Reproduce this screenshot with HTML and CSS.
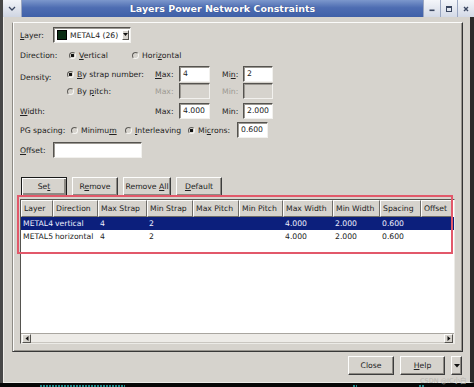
FILE: index.html
```html
<!DOCTYPE html>
<html>
<head>
<meta charset="utf-8">
<link rel="stylesheet" href="styles.css">
</head>
<body>
<div class="screen">
  <div class="window">
    <div class="titlebar">
      <div class="sysbtn"><svg width="8" height="5" viewBox="0 0 8 5"><path d="M1 1 L4 4 L7 1" fill="none" stroke="#3a4660" stroke-width="1.3"/></svg></div>
      <div class="title">Layers Power Network Constraints</div>
      <div class="wbtn"><svg width="8" height="8" viewBox="0 0 8 8"><rect x="1.5" y="4.5" width="5" height="1.6" fill="#3a4660"/></svg></div>
      <div class="wbtn"><svg width="8" height="8" viewBox="0 0 8 8"><rect x="1.5" y="1.5" width="5" height="5" fill="none" stroke="#3a4660" stroke-width="1"/><rect x="1.5" y="1.5" width="5" height="1.5" fill="#3a4660"/></svg></div>
      <div class="wbtn"><svg width="8" height="8" viewBox="0 0 8 8"><path d="M2 2 L6 6 M6 2 L2 6" stroke="#3a4660" stroke-width="1.4"/></svg></div>
    </div>
    <div class="body">
      <div class="panel">
        <div class="row r-layer">
          <span class="lbl w-layer"><u>L</u>ayer:</span>
          <div class="combo">
            <span class="swatch"></span>
            <span class="combo-text">METAL4 (26)</span>
            <span class="combo-arrow"><svg width="5" height="4" viewBox="0 0 5 4"><path d="M0 0 H5 L2.5 3 Z" fill="#111"/></svg></span>
          </div>
        </div>

        <div class="row r-dir">
          <span class="lbl w-dir">Direction:</span>
          <span class="opt w-vert"><span class="radio on"></span><span><u>V</u>ertical</span></span>
          <span class="opt"><span class="radio"></span><span>Hori<u>z</u>ontal</span></span>
        </div>

        <div class="row r-dens1">
          <span class="lbl w-dens dens-lbl">Density:</span>
          <span class="opt w-dopt"><span class="radio on"></span><span><u>B</u>y strap number:</span></span>
          <span class="lbl w-max"><u>M</u>ax:</span>
          <span class="field w-in1">4</span>
          <span class="spacer"></span>
          <span class="lbl w-min">Mi<u>n</u>:</span>
          <span class="field w-in2">2</span>
        </div>

        <div class="row r-dens2">
          <span class="lbl w-dens"></span>
          <span class="opt w-dopt"><span class="radio"></span><span>By <u>p</u>itch:</span></span>
          <span class="lbl w-max dis">Max:</span>
          <span class="field w-in1 off"></span>
          <span class="spacer"></span>
          <span class="lbl w-min dis">Min:</span>
          <span class="field w-in2 off"></span>
        </div>

        <div class="row r-width">
          <span class="lbl w-dens"><u>W</u>idth:</span>
          <span class="w-dopt"></span>
          <span class="lbl w-max">Max:</span>
          <span class="field w-in1">4.000</span>
          <span class="spacer"></span>
          <span class="lbl w-min">Min:</span>
          <span class="field w-in2">2.000</span>
        </div>

        <div class="row r-pg">
          <span class="lbl w-pg">PG spacing:</span>
          <span class="opt w-minimum"><span class="radio"></span><span>Minimu<u>m</u></span></span>
          <span class="opt w-inter"><span class="radio"></span><span><u>I</u>nterleaving</span></span>
          <span class="opt w-microns"><span class="radio on"></span><span>Mi<u>c</u>rons:</span></span>
          <span class="field w-in1">0.600</span>
        </div>

        <div class="row r-offset">
          <span class="lbl w-layer"><u>O</u>ffset:</span>
          <span class="field w-offset"></span>
        </div>

        <div class="btnrow">
          <button class="btn default"><span>Se<u>t</u></span></button>
          <button class="btn"><span>R<u>e</u>move</span></button>
          <button class="btn wide"><span>Remove <u>A</u>ll</span></button>
          <button class="btn"><span><u>D</u>efault</span></button>
        </div>

        <div class="list">
          <div class="grid">
            <div class="thead">
              <span class="th c1">Layer</span>
              <span class="th c2">Direction</span>
              <span class="th c3">Max Strap</span>
              <span class="th c4">Min Strap</span>
              <span class="th c5">Max Pitch</span>
              <span class="th c6">Min Pitch</span>
              <span class="th c7">Max Width</span>
              <span class="th c8">Min Width</span>
              <span class="th c9">Spacing</span>
              <span class="th c10">Offset</span>
            </div>
            <div class="tr sel">
              <span class="td c1">METAL4</span>
              <span class="td c2">vertical</span>
              <span class="td c3">4</span>
              <span class="td c4">2</span>
              <span class="td c5"></span>
              <span class="td c6"></span>
              <span class="td c7">4.000</span>
              <span class="td c8">2.000</span>
              <span class="td c9">0.600</span>
              <span class="td c10"></span>
            </div>
            <div class="tr">
              <span class="td c1">METAL5</span>
              <span class="td c2">horizontal</span>
              <span class="td c3">4</span>
              <span class="td c4">2</span>
              <span class="td c5"></span>
              <span class="td c6"></span>
              <span class="td c7">4.000</span>
              <span class="td c8">2.000</span>
              <span class="td c9">0.600</span>
              <span class="td c10"></span>
            </div>
          </div>
          <div class="hscroll">
            <span class="sarrow"><svg width="4" height="5" viewBox="0 0 4 5"><path d="M3.5 0 V5 L0.5 2.5 Z" fill="#111"/></svg></span>
            <span class="track"></span>
            <span class="sarrow"><svg width="4" height="5" viewBox="0 0 4 5"><path d="M0.5 0 V5 L3.5 2.5 Z" fill="#111"/></svg></span>
          </div>
        </div>
      </div>

      <div class="footer">
        <button class="btn"><span>Close</span></button>
        <button class="btn help"><span><u>H</u>elp</span></button>
        <button class="btn arrowbtn"><svg width="6" height="4" viewBox="0 0 6 4"><path d="M0 0 H6 L3 3.5 Z" fill="#111"/></svg></button>
      </div>
    </div>
  </div>
  <div class="desktop"><span class="teal t1"></span><span class="teal t2"></span><span class="teal t3"></span></div>
  <div class="annot"></div>
  <div class="watermark">CSDN @IC小白</div>
</div>
</body>
</html>
```

FILE: styles.css
```css
* { box-sizing: border-box; margin: 0; padding: 0; }
html, body { width: 474px; height: 387px; overflow: hidden; }
body {
  background: #444;
  font-family: "DejaVu Sans", "Noto Sans CJK SC", sans-serif;
  font-size: 7.7px;
  color: #222;
}
u { text-decoration: underline; text-underline-offset: 1px; }

.screen { position: relative; width: 474px; height: 387px; background: #474747; }

.window {
  margin-left: 3px;
  width: 471px;
  height: 383px;
  display: flex;
  flex-direction: column;
}

/* title bar */
.titlebar {
  height: 17px;
  display: flex;
  gap: 1px;
  background: #9aa6c0;
}
.sysbtn {
  width: 18px;
  background: linear-gradient(#f2f4f8, #cfd5e2);
  display: flex;
  align-items: center;
  justify-content: center;
}
.title {
  flex: 1;
  background: linear-gradient(#7c97cc, #4e6db2 45%, #3f60a8);
  color: #fff;
  font-weight: bold;
  font-size: 9.5px;
  display: flex;
  align-items: center;
  justify-content: center;
  text-shadow: 0 0 1px #2a3f78;
}
.wbtn {
  width: 16px;
  background: linear-gradient(#f4f6fa, #d3d9e6);
  display: flex;
  align-items: center;
  justify-content: center;
}

/* body */
.body {
  flex: 1;
  background: #d6d3cd;
  border-left: 1px solid #efede9;
  border-right: 4px solid #2c2c2c;
  border-bottom: 1px solid #ecebe7;
  padding: 5px 7px 0 8px;
  display: flex;
  flex-direction: column;
}

.panel {
  height: 330px;
  border: 1px solid;
  border-color: #fbfbfa #333 #383838 #8d8a84;
  box-shadow: inset 1px 0 #fbfbfa, inset -1px -1px #97948e;
  display: flex;
  flex-direction: column;
  padding-left: 7px;
}

.row {
  height: 16px;
  display: flex;
  align-items: center;
  white-space: nowrap;
}
.r-layer { margin-top: 4px; }
.r-dir { margin-top: 4px; }
.r-dens1 { margin-top: 3px; }
.r-dens2 { margin-top: 1px; }
.r-width { margin-top: 4px; }
.r-pg { margin-top: 3px; }
.r-offset { margin-top: 4px; }

.lbl { display: inline-block; }
.dis { color: #9c9992; }
.w-layer { width: 33px; }
.w-dir { width: 49px; }
.w-dens { width: 47px; }
.dens-lbl { align-self: flex-start; line-height: 16px; padding-top: 4px; height: 16px; }
.w-dopt { width: 88px; display: inline-block; }
.w-max { width: 24px; }
.w-min { width: 21px; }
.spacer { width: 12px; }
.w-pg { width: 51px; }
.w-minimum { width: 54px; }
.w-inter { width: 63px; }
.w-microns { width: 49px; }
.w-vert { width: 63px; }

.opt { display: inline-flex; align-items: center; gap: 3px; }
.radio {
  width: 7px;
  height: 7px;
  border-radius: 50%;
  border: 1px solid;
  border-color: #5e5c58 #f6f5f2 #f6f5f2 #5e5c58;
  flex: none;
}
.radio.on { background: radial-gradient(circle, #111 0 1.4px, transparent 2px); }

.field {
  height: 16px;
  background: #fff;
  border: 1px solid;
  border-color: #55534f #f2f1ee #f2f1ee #55534f;
  box-shadow: inset 1px 1px #9b9892;
  padding-left: 3px;
  line-height: 14px;
  color: #222;
}
.field.off { background: #d6d3cd; }
.w-in1 { width: 31px; }
.w-in2 { width: 30px; }
.w-offset { width: 89px; }

/* combo */
.combo {
  width: 78px;
  height: 16px;
  background: #fff;
  border: 1px solid;
  border-color: #55534f #f2f1ee #f2f1ee #55534f;
  box-shadow: inset 1px 1px #9b9892;
  display: flex;
  align-items: center;
  padding-left: 3px;
}
.swatch {
  width: 10px;
  height: 10px;
  background: #0a2d14;
  border: 1px solid #000;
  flex: none;
}
.combo-text { margin-left: 3px; }
.combo-arrow {
  margin-left: auto;
  margin-right: 1px;
  width: 7px;
  height: 10px;
  background: #d6d3cd;
  border: 1px solid;
  border-color: #fff #55534f #55534f #fff;
  display: flex;
  align-items: center;
  justify-content: center;
}

/* buttons */
.btn {
  font-family: inherit;
  font-size: 7.7px;
  color: #222;
  height: 19px;
  width: 46px;
  background: #d6d3cd;
  border: 1px solid;
  border-color: #fdfdfc #3c3c3c #3c3c3c #fdfdfc;
  box-shadow: inset -1px -1px #8d8a84;
  display: flex;
  align-items: center;
  justify-content: center;
  white-space: nowrap;
}
.btn.wide { width: 48px; }
.btn.default {
  border: 1px solid #1a1a1a;
  box-shadow: inset 1px 1px #fdfdfc, inset -2px -2px #8d8a84;
}
.btnrow {
  margin-top: 19px;
  margin-left: 1px;
  display: flex;
  gap: 5px;
}

/* list */
.list {
  margin-top: 3px;
  width: 435px;
  height: 145px;
  background: #fff;
  border: 1px solid;
  border-color: #55534f #ecebe7 #ecebe7 #55534f;
  display: flex;
  flex-direction: column;
}
.grid { flex: 1; }
.thead { display: flex; height: 17px; }
.th {
  height: 17px;
  background: #d6d3cd;
  border: 1px solid;
  border-color: #fdfdfc #6e6c68 #6e6c68 #fdfdfc;
  padding-left: 2px;
  line-height: 15px;
  white-space: nowrap;
  overflow: hidden;
}
.tr { display: flex; height: 13px; align-items: center; }
.tr.sel { background: #0c1f7c; color: #eef0ff; }
.td { padding-left: 2px; white-space: nowrap; overflow: hidden; }
.c1 { width: 32px; }
.c2 { width: 45px; }
.c3 { width: 49px; }
.c4 { width: 46px; }
.c5 { width: 46px; }
.c6 { width: 44px; }
.c7 { width: 50px; }
.c8 { width: 47px; }
.c9 { width: 41px; }
.c10 { width: 31px; }
.tr .c10 { width: 33px; }
.tr .c1 { overflow: visible; }

.hscroll {
  height: 10px;
  display: flex;
  align-items: center;
  border-top: 1px solid #a9a6a0;
  background: #edebe7;
  padding: 0 1px;
}
.sarrow {
  width: 9px;
  height: 9px;
  background: #d6d3cd;
  border: 1px solid;
  border-color: #fdfdfc #55534f #55534f #fdfdfc;
  display: flex;
  align-items: center;
  justify-content: center;
  flex: none;
}
.track { flex: 1; height: 9px; border-bottom: 1px solid #c9c6c0; }

/* footer */
.footer {
  margin-top: 4px;
  margin-right: 1px;
  display: flex;
  justify-content: flex-end;
  gap: 6px;
}
.btn.help { width: 45px; }
.btn.arrowbtn { width: 11px; }

/* desktop strip below window */
.desktop {
  height: 4px;
  background: #070707;
  display: flex;
  align-items: flex-end;
}
.teal { height: 2px; background: repeating-linear-gradient(90deg, #1f8a8a 0 2px, transparent 2px 3px); }
.t1 { margin-left: 40px; width: 85px; }
.t2 { margin-left: 228px; width: 4px; }
.t3 { margin-left: 62px; width: 6px; }

/* annotation overlay */
.annot {
  position: absolute;
  left: 17px;
  top: 195px;
  width: 436px;
  height: 59px;
  border: 2px solid #e2586a;
  pointer-events: none;
}
.watermark {
  position: absolute;
  left: 420px;
  top: 375px;
  font-size: 6.5px;
  color: #b9b7b2;
  white-space: nowrap;
}
```
